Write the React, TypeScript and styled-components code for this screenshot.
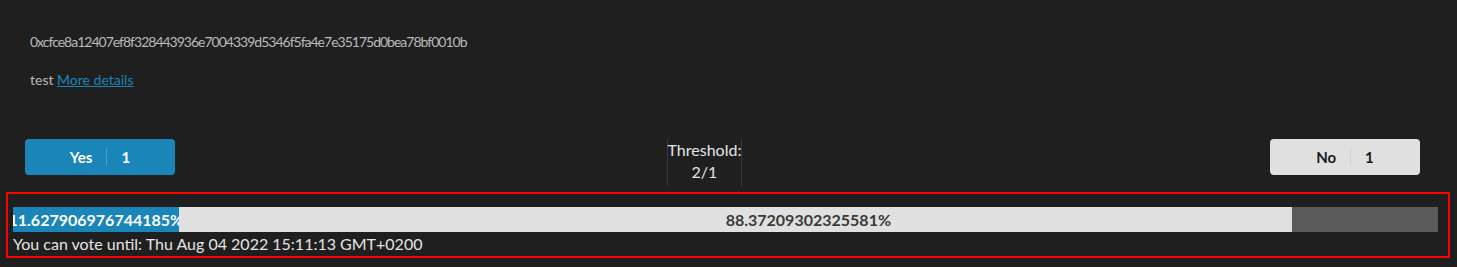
import styled, { createGlobalStyle } from "styled-components";

const GlobalStyle = createGlobalStyle`
  html, body {
    margin: 0;
    padding: 0;
    background: #1f1f1f;
    font-family: Lato, "Open Sans", sans-serif;
  }
`;

const Page = styled.div`
  width: 1457px;
  height: 267px;
  background: #1f1f1f;
  overflow: hidden;
`;

const Info = styled.div`
  display: flex;
  flex-direction: column;
  gap: 21px;
  padding: 33px 30px 0;
  font-size: 14px;
  color: #b9b9b9;
`;

const Line = styled.div`
  line-height: 17px;
`;

const Hash = styled(Line)`
  letter-spacing: -1px;
`;

const Link = styled.a`
  color: #1a85b8;
  text-decoration: underline;
  cursor: pointer;
`;

const VoteRow = styled.div`
  display: flex;
  justify-content: space-between;
  align-items: flex-start;
  padding: 51px 37px 0 25px;
`;

const VoteButton = styled.button<{ $variant: "yes" | "no" }>`
  width: 150px;
  height: 36px;
  border: none;
  border-radius: 4px;
  display: flex;
  align-items: center;
  justify-content: center;
  font-family: Lato, sans-serif;
  font-weight: 700;
  font-size: 15px;
  background: ${(p) => (p.$variant === "yes" ? "#1a85b8" : "#e0e0e0")};
  color: ${(p) => (p.$variant === "yes" ? "#ffffff" : "#1a1a1a")};
`;

const Divider = styled.span<{ $variant: "yes" | "no" }>`
  width: 1px;
  height: 18px;
  margin: 0 14px;
  background: ${(p) =>
    p.$variant === "yes" ? "rgba(255,255,255,0.2)" : "rgba(0,0,0,0.06)"};
`;

const Threshold = styled.div`
  display: flex;
  flex-direction: column;
  align-items: center;
  height: 47px;
  margin-right: 36px;
  border-left: 1px solid #3a3a3a;
  border-right: 1px solid #3a3a3a;
  color: #e4e4e4;
  font-size: 16px;
  line-height: 22px;
`;

const ResultBox = styled.div`
  box-sizing: border-box;
  margin: 6px 7px 0 6px;
  height: 66px;
  border: 2px solid #ff0000;
  padding: 13px 10px 0 5px;
`;

const Bar = styled.div`
  display: flex;
  height: 25px;
  background: #5a5a5a;
  font-weight: 700;
  font-size: 16px;
`;

const YesFill = styled.div`
  display: flex;
  justify-content: center;
  align-items: center;
  overflow: hidden;
  white-space: nowrap;
  background: #1a85b8;
  color: #ffffff;
`;

const Rest = styled.div`
  position: relative;
  flex: 1;
  display: flex;
`;

const NoFill = styled.div`
  background: #e0e0e0;
  height: 100%;
`;

const NoLabel = styled.span`
  position: absolute;
  inset: 0;
  display: flex;
  align-items: center;
  justify-content: center;
  color: #3a3a3a;
`;

const Deadline = styled.div`
  margin-top: 2px;
  font-size: 16px;
  line-height: 20px;
  color: #e4e4e4;
`;

export default function App() {
  const yes = 11.627906976744185;
  const no = 88.37209302325581;
  return (
    <Page>
      <GlobalStyle />
      <Info>
        <Hash>0xcfce8a12407ef8f328443936e7004339d5346f5fa4e7e35175d0bea78bf0010b</Hash>
        <Line>
          test <Link>More details</Link>
        </Line>
      </Info>
      <VoteRow>
        <VoteButton $variant="yes">
          Yes<Divider $variant="yes" />1
        </VoteButton>
        <Threshold>
          <span>Threshold:</span>
          <span>2/1</span>
        </Threshold>
        <VoteButton $variant="no">
          No<Divider $variant="no" />1
        </VoteButton>
      </VoteRow>
      <ResultBox>
        <Bar>
          <YesFill style={{ width: `${yes}%` }}>{yes}%</YesFill>
          <Rest>
            <NoFill style={{ width: `${no}%` }} />
            <NoLabel>{no}%</NoLabel>
          </Rest>
        </Bar>
        <Deadline>You can vote until: Thu Aug 04 2022 15:11:13 GMT+0200</Deadline>
      </ResultBox>
    </Page>
  );
}
